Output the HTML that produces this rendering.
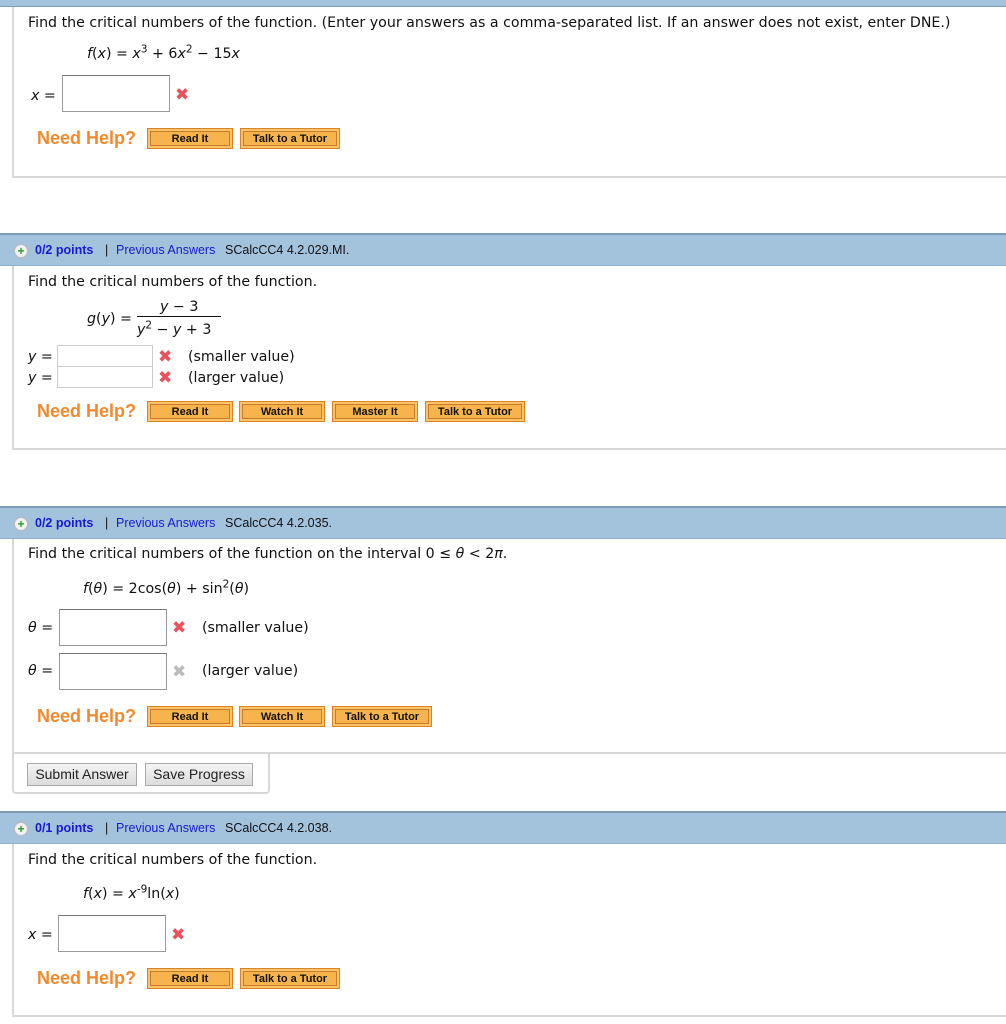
<!DOCTYPE html>
<html><head><meta charset="utf-8"><style>
body{margin:0;width:1006px;height:1024px;background:#fff;position:relative;overflow:hidden;font-family:"DejaVu Sans","Liberation Sans",sans-serif;font-size:14.2px;color:#111}
.a{position:absolute;white-space:nowrap;line-height:16px;margin-top:1px}
.bar{position:absolute;left:0;width:1006px;height:30px;background:#a3c2dc;border-top:2px solid #7d9bb5;border-bottom:1px solid #8fb0cc}
.bar .a{top:7px;font-family:"Liberation Sans",sans-serif;font-size:12.5px;margin-top:0}
.pl{position:absolute;left:14px;top:9px;width:12px;height:12px;border-radius:50%;background:#f2f2f2;border:1px solid #bbb;color:#2a9a2a;font:bold 12px/12px "Liberation Sans",sans-serif;text-align:center}
.vl{position:absolute;left:12px;width:2px;background:#d8d8d8}
.hl{position:absolute;left:12px;right:0;height:2px;background:#d8d8d8}
.in{position:absolute;border:1px solid #999;border-top-color:#777;background:#fff;box-sizing:border-box}
.in2{position:absolute;border:1px solid #ccc;background:#fff;box-sizing:border-box}
.x{position:absolute;color:#e8525a;font:bold 17px/16px "DejaVu Sans",sans-serif}
.nh{position:absolute;color:#f08a2c;font:bold 18px/20px "Liberation Sans",sans-serif}
.b{position:absolute;height:21px;box-sizing:border-box;background:#f7b34c;border:1px solid #d9822b;box-shadow:inset 0 0 0 2px #fcc465,inset 0 0 0 3px #c97a2c;font:bold 11px/20px "Liberation Sans",sans-serif;text-align:center;color:#111}
.g{position:absolute;height:23px;box-sizing:border-box;background:linear-gradient(#f4f4f4,#dcdcdc);border:1px solid #aaa;font:14px/21px "Liberation Sans",sans-serif;text-align:center;color:#222}
i{font-style:italic}
sup{font-size:10.5px;line-height:0}
</style></head><body>
<div style="position:absolute;left:0;top:0;width:1006px;height:6px;background:#a3c2dc;border-bottom:1px solid #7d9bb5"></div>
<div class="vl" style="top:7px;height:171px"></div>
<div class="hl" style="top:176px"></div>
<div class="a" style="left:28px;top:14px">Find the critical numbers of the function. (Enter your answers as a comma-separated list. If an answer does not exist, enter DNE.)</div>
<div class="a" style="left:87px;top:45px"><i>f</i>(<i>x</i>) = <i>x</i><sup>3</sup> + 6<i>x</i><sup>2</sup> − 15<i>x</i></div>
<div class="a" style="left:31px;top:87px"><i>x</i> =</div>
<div class="in" style="left:62px;top:75px;width:108px;height:37px"></div>
<div class="x" style="left:175px;top:87px">✖</div>
<div class="nh" style="left:37px;top:128px">Need Help?</div>
<div class="b" style="left:147px;top:128px;width:86px">Read It</div>
<div class="b" style="left:240px;top:128px;width:100px">Talk to a Tutor</div>

<div class="bar" style="top:233px"><div class="pl">+</div><div class="a" style="left:35px;color:#1a1acc;font-weight:bold">0/2 points</div><div class="a" style="left:105px">|</div><div class="a" style="left:116px;color:#1a1acc">Previous Answers</div><div class="a" style="left:225px">SCalcCC4 4.2.029.MI.</div></div>
<div class="vl" style="top:266px;height:184px"></div>
<div class="hl" style="top:448px"></div>
<div class="a" style="left:28px;top:273px">Find the critical numbers of the function.</div>
<div class="a" style="left:87px;top:310px"><i>g</i>(<i>y</i>) =</div>
<div class="a" style="left:160px;top:298px"><i>y</i> − 3</div>
<div style="position:absolute;left:137px;top:316px;width:84px;height:1px;background:#111"></div>
<div class="a" style="left:137px;top:321px"><i>y</i><sup>2</sup> − <i>y</i> + 3</div>
<div class="a" style="left:28px;top:348px"><i>y</i> =</div>
<div class="in2" style="left:57px;top:345px;width:96px;height:22px"></div>
<div class="x" style="left:158px;top:349px">✖</div>
<div class="a" style="left:188px;top:348px">(smaller value)</div>
<div class="a" style="left:28px;top:369px"><i>y</i> =</div>
<div class="in2" style="left:57px;top:366px;width:96px;height:22px"></div>
<div class="x" style="left:158px;top:370px">✖</div>
<div class="a" style="left:188px;top:369px">(larger value)</div>
<div class="nh" style="left:37px;top:401px">Need Help?</div>
<div class="b" style="left:147px;top:401px;width:86px">Read It</div>
<div class="b" style="left:239px;top:401px;width:86px">Watch It</div>
<div class="b" style="left:332px;top:401px;width:86px">Master It</div>
<div class="b" style="left:425px;top:401px;width:100px">Talk to a Tutor</div>

<div class="bar" style="top:506px"><div class="pl">+</div><div class="a" style="left:35px;color:#1a1acc;font-weight:bold">0/2 points</div><div class="a" style="left:105px">|</div><div class="a" style="left:116px;color:#1a1acc">Previous Answers</div><div class="a" style="left:225px">SCalcCC4 4.2.035.</div></div>
<div class="vl" style="top:539px;height:250px"></div>
<div class="hl" style="top:752px"></div>
<div style="position:absolute;left:12px;top:752px;width:254px;height:40px;border:2px solid #d8d8d8;border-top:none;border-radius:0 0 4px 4px"></div>
<div class="a" style="left:28px;top:545px">Find the critical numbers of the function on the interval 0 ≤ <i>θ</i> &lt; 2<i>π</i>.</div>
<div class="a" style="left:83px;top:580px"><i>f</i>(<i>θ</i>) = 2cos(<i>θ</i>) + sin<sup>2</sup>(<i>θ</i>)</div>
<div class="a" style="left:28px;top:619px"><i>θ</i> =</div>
<div class="in" style="left:59px;top:609px;width:108px;height:37px"></div>
<div class="x" style="left:172px;top:620px">✖</div>
<div class="a" style="left:202px;top:619px">(smaller value)</div>
<div class="a" style="left:28px;top:662px"><i>θ</i> =</div>
<div class="in" style="left:59px;top:653px;width:108px;height:37px"></div>
<div class="x" style="left:172px;top:664px;color:#bbb">✖</div>
<div class="a" style="left:202px;top:662px">(larger value)</div>
<div class="nh" style="left:37px;top:706px">Need Help?</div>
<div class="b" style="left:147px;top:706px;width:86px">Read It</div>
<div class="b" style="left:239px;top:706px;width:86px">Watch It</div>
<div class="b" style="left:332px;top:706px;width:100px">Talk to a Tutor</div>
<div class="g" style="left:27px;top:763px;width:110px">Submit Answer</div>
<div class="g" style="left:145px;top:763px;width:108px">Save Progress</div>

<div class="bar" style="top:811px"><div class="pl">+</div><div class="a" style="left:35px;color:#1a1acc;font-weight:bold">0/1 points</div><div class="a" style="left:105px">|</div><div class="a" style="left:116px;color:#1a1acc">Previous Answers</div><div class="a" style="left:225px">SCalcCC4 4.2.038.</div></div>
<div class="vl" style="top:844px;height:173px"></div>
<div class="hl" style="top:1015px"></div>
<div class="a" style="left:28px;top:851px">Find the critical numbers of the function.</div>
<div class="a" style="left:83px;top:885px"><i>f</i>(<i>x</i>) = <i>x</i><sup>-9</sup>ln(<i>x</i>)</div>
<div class="a" style="left:28px;top:926px"><i>x</i> =</div>
<div class="in" style="left:58px;top:915px;width:108px;height:37px"></div>
<div class="x" style="left:171px;top:927px">✖</div>
<div class="nh" style="left:37px;top:968px">Need Help?</div>
<div class="b" style="left:147px;top:968px;width:86px">Read It</div>
<div class="b" style="left:240px;top:968px;width:100px">Talk to a Tutor</div>
</body></html>
